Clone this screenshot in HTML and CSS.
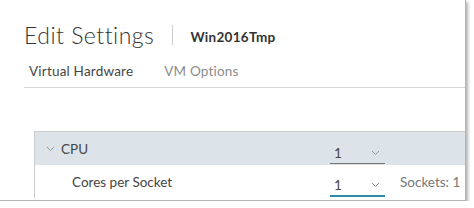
FILE: index.html
```html
<!DOCTYPE html>
<html lang="en">
<head>
<meta charset="UTF-8" />
<title>Edit Settings</title>
<link rel="stylesheet" href="styles.css">
</head>
<body>
<div class="dialog">
  <div class="header">
    <h1>Edit Settings</h1>
    <span class="divider"></span>
    <span class="vm-name">Win2016Tmp</span>
  </div>

  <div class="tabs">
    <span class="tab active">Virtual Hardware</span>
    <span class="tab">VM Options</span>
  </div>

  <div class="hw-table">
    <div class="hw-row group">
      <div class="hw-label">
        <svg class="caret" width="9" height="6" viewBox="0 0 9 6"><path d="M1 1 L4.5 4.5 L8 1" fill="none" stroke="#8a96a0" stroke-width="1"/></svg>
        CPU
      </div>
      <div class="hw-select">
        <span>1</span>
        <svg class="caret" width="9" height="6" viewBox="0 0 9 6"><path d="M1 1 L4.5 4.5 L8 1" fill="none" stroke="#8a96a0" stroke-width="1"/></svg>
      </div>
      <div class="hw-extra"></div>
    </div>
    <div class="hw-row">
      <div class="hw-label sub">Cores per Socket</div>
      <div class="hw-select focus">
        <span>1</span>
        <svg class="caret" width="9" height="6" viewBox="0 0 9 6"><path d="M1 1 L4.5 4.5 L8 1" fill="none" stroke="#8a96a0" stroke-width="1"/></svg>
      </div>
      <div class="hw-extra">Sockets: 1</div>
    </div>
  </div>
</div>
</body>
</html>
```

FILE: styles.css
```css
body {
  margin: 0;
  background: #fff;
  font-family: Lato, "Open Sans", sans-serif;
  color: #565656;
}
.dialog {
  width: 466px;
  height: 201px;
  background: #fff;
  border-right: 1px solid #b5b5b5;
  border-bottom: 1px solid #b5b5b5;
  box-shadow: 2px 2px 3px rgba(0,0,0,0.3);
  overflow: hidden;
  box-sizing: border-box;
}
.header {
  display: flex;
  align-items: center;
  padding: 22px 0 0 24px;
  height: 26px;
}
h1 {
  margin: 0;
  font-size: 23px;
  font-weight: 300;
  color: #333;
  letter-spacing: 0.5px;
}
.divider {
  width: 1px;
  height: 20px;
  background: #ccc;
  margin: 0 17px 0 18px;
}
.vm-name {
  font-size: 13.5px;
  font-weight: 700;
  color: #333;
  padding-top: 3px;
  letter-spacing: 0.3px;
}
.tabs {
  display: flex;
  gap: 31px;
  margin: 15px 0 0 24px;
  padding: 0 0 8px 5px;
  border-bottom: 1px solid #d7d7d7;
}
.tab {
  font-size: 13.5px;
  color: #8c8c8c;
  letter-spacing: 0.2px;
}
.tab.active {
  color: #454545;
}
.hw-table {
  margin: 43px 0 0 34px;
  border-left: 1px solid #ccc;
  border-top: 1px solid #ccc;
}
.hw-row {
  display: flex;
  align-items: center;
  height: 33px;
  font-size: 13.5px;
  color: #454545;
  white-space: nowrap;
}
.hw-row.group {
  background: #dce4ea;
}
.hw-label {
  flex: 0 0 295px;
  box-sizing: border-box;
  padding-left: 11px;
  display: flex;
  align-items: center;
  gap: 6px;
}
.hw-label.sub {
  padding-left: 37px;
}
.hw-select {
  flex: 0 0 55px;
  height: 21px;
  display: flex;
  align-items: center;
  justify-content: space-between;
  padding: 0 5px 0 4px;
  box-sizing: border-box;
  border-bottom: 1px solid #777;
  margin-top: 9px;
}
.hw-select.focus {
  border-bottom: 2px solid #2a8ca5;
}
.hw-extra {
  margin-left: 15px;
  color: #777;
}
```
